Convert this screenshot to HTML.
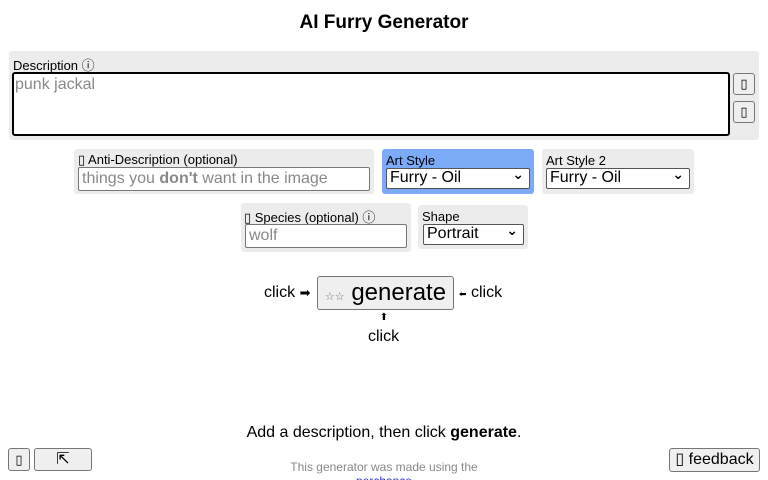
<!DOCTYPE html>
<html><head><meta charset="utf-8"><style>
*{box-sizing:border-box}
html,body{margin:0;width:768px;height:480px;overflow:hidden}
body{font-family:"Liberation Sans","DejaVu Sans",sans-serif;background:#fff;color:#000;position:relative}
.a{position:absolute}
.box{position:absolute;background:#ececec;border-radius:3px}
.lbl{position:absolute;font-size:13px}
.inp{position:absolute;background:#fff;border:1px solid #777;border-radius:2px;font-size:16px;color:#888;padding-left:3px}
.sel{position:absolute;background:#fff;border:1px solid #555;border-radius:2px;font-size:16px;padding-left:3px;line-height:18px}
.sel:after{content:"⌄";position:absolute;right:5px;top:-4px;font-weight:bold;font-size:14px}
.btn{position:absolute;background:#efefef;border:1px solid #767676;border-radius:3px;font-size:13px;text-align:center}
</style></head><body>
<div class="a" style="left:0;width:768px;top:12px;text-align:center;font-size:19px;font-weight:bold">AI Furry Generator</div>

<div class="box" style="left:9px;top:51px;width:750px;height:89px"></div>
<div class="lbl" style="left:13px;top:55px">Description ⓘ</div>
<div class="a" style="left:12px;top:72px;width:718px;height:64px;border:2px solid #000;border-radius:3px;background:#fff;font-size:16px;color:#888;padding:2px 1px">punk jackal</div>
<div class="btn" style="left:733px;top:73px;width:22px;height:22px;line-height:20px">▯</div>
<div class="btn" style="left:733px;top:101px;width:22px;height:22px;line-height:20px">▯</div>

<div class="box" style="left:74px;top:149px;width:300px;height:45px"></div>
<div class="lbl" style="left:78px;top:152px">▯ Anti-Description (optional)</div>
<div class="inp" style="left:78px;top:167px;width:292px;height:24px;line-height:22px">things you <b>don't</b> want in the image</div>

<div class="box" style="left:382px;top:149px;width:152px;height:45px;background:#7baaf7"></div>
<div class="lbl" style="left:386px;top:153px">Art Style</div>
<div class="sel" style="left:386px;top:168px;width:144px;height:21px;color:#000">Furry - Oil</div>

<div class="box" style="left:542px;top:149px;width:152px;height:45px"></div>
<div class="lbl" style="left:546px;top:153px">Art Style 2</div>
<div class="sel" style="left:546px;top:168px;width:144px;height:21px;color:#000">Furry - Oil</div>

<div class="box" style="left:241px;top:203px;width:170px;height:49px"></div>
<div class="lbl" style="left:244px;top:207px">▯ Species (optional) ⓘ</div>
<div class="inp" style="left:245px;top:224px;width:162px;height:24px;line-height:22px">wolf</div>

<div class="box" style="left:418px;top:205px;width:110px;height:44px"></div>
<div class="lbl" style="left:422px;top:209px">Shape</div>
<div class="sel" style="left:423px;top:224px;width:101px;height:21px;color:#000">Portrait</div>

<div class="a" style="left:264px;top:284px;font-size:16px">click <span style="font-size:13px">➡</span></div>
<div class="btn" style="left:317px;top:276px;width:137px;height:34px;font-size:24px;line-height:32px"><span style="font-size:11px;color:#777">☆☆</span> generate</div>
<div class="a" style="left:459px;top:284px;font-size:16px"><span style="font-size:9px">⬅</span> click</div>
<div class="a" style="left:368px;top:312px;width:32px;text-align:center;font-size:10px">⬆</div>
<div class="a" style="left:368px;top:328px;font-size:16px">click</div>

<div class="a" style="left:0;width:768px;top:424px;text-align:center;font-size:16px">Add a description, then click <b>generate</b>.</div>

<div class="btn" style="left:8px;top:448px;width:22px;height:23px;line-height:21px">▯</div>
<div class="btn" style="left:34px;top:448px;width:58px;height:23px;line-height:21px;font-size:16px">⇱</div>
<div class="btn" style="left:669px;top:448px;width:91px;height:24px;line-height:22px;font-size:16px">▯ feedback</div>
<div class="a" style="left:0;width:768px;top:460px;text-align:center;font-size:12px;color:#888">This generator was made using the</div>
<div class="a" style="left:0;width:768px;top:474px;text-align:center;font-size:12px;color:#33c">perchance</div>
</body></html>
